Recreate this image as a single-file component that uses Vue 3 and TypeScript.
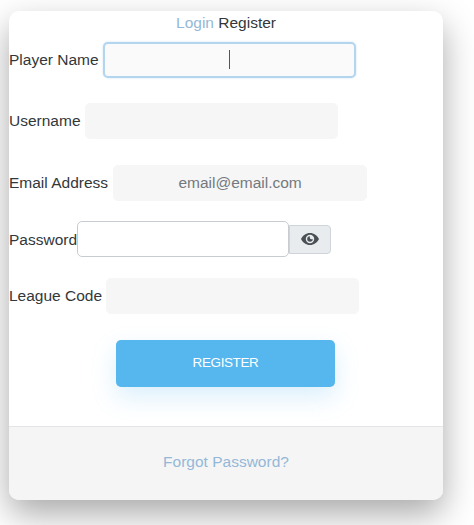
<script setup lang="ts">
interface Field {
  label: string
  placeholder?: string
  kind?: string
}

const fields: Field[] = [
  { label: 'Player Name', kind: 'focused' },
  { label: 'Username', kind: 'plain' },
  { label: 'Email Address', placeholder: 'email@email.com', kind: 'email' },
  { label: 'Password', kind: 'password' },
  { label: 'League Code', kind: 'plain' },
]
</script>

<template>
  <div class="page">
    <div class="card">
      <div class="tabs"><a class="link">Login</a> <span>Register</span></div>
      <form class="form" @submit.prevent>
        <div v-for="f in fields" :key="f.label" class="row" :class="f.kind">
          <label class="label">{{ f.label }}</label>
          <div v-if="f.kind === 'focused'" class="input-wrap">
            <input class="input" type="text" />
            <span class="caret"></span>
          </div>
          <template v-else-if="f.kind === 'password'">
            <input class="input" type="password" />
            <button class="eye" type="button" aria-label="Show password">
              <svg width="18" height="12" viewBox="0 0 18 12">
                <path
                  fill="#4a5056"
                  fill-rule="evenodd"
                  d="M9 0C5 0 1.8 2.4 0 6c1.8 3.6 5 6 9 6s7.200-2.400 9-6c-1.800-3.600-5-6-9-6zm0 10.200A4.200 4.200 0 1 1 9 1.800a4.200 4.200 0 0 1 0 8.400z"
                />
                <path fill="#4a5056" d="M9 3.200a2.800 2.800 0 1 0 2.800 2.800c-.9.500-2.400.1-2.800-.6-.4-.7-.4-1.500 0-2.200z" />
              </svg>
            </button>
          </template>
          <input v-else class="input" type="text" :placeholder="f.placeholder" />
        </div>
        <div class="actions">
          <button class="submit" type="submit">REGISTER</button>
        </div>
      </form>
      <div class="footer"><a class="link">Forgot Password?</a></div>
    </div>
  </div>
</template>

<style>
html,
body {
  margin: 0;
  background: #fff;
}
</style>

<style scoped>
.page {
  width: 474px;
  height: 525px;
  overflow: hidden;
  padding: 11px 31px 0 9px;
  box-sizing: border-box;
  font-family: "Liberation Sans", Arial, sans-serif;
  font-size: 15.5px;
  color: #33373a;
}
.card {
  width: 434px;
  height: 489px;
  background: #fff;
  border-radius: 10px;
  box-shadow: 0 14px 34px rgba(0, 0, 0, 0.34);
  display: flex;
  flex-direction: column;
}
.tabs {
  height: 24px;
  line-height: 23px;
  text-align: center;
}
.link {
  color: #94b8d6;
}
.form {
  flex: 1;
  display: flex;
  flex-direction: column;
  padding-top: 7px;
}
.row {
  display: flex;
  align-items: center;
  height: 36px;
  margin-bottom: 26px;
}
.row.focused {
  margin-bottom: 25px;
}
.row.email {
  margin-bottom: 20px;
}
.row.password {
  margin-bottom: 21px;
}
.label {
  white-space: nowrap;
  margin-right: 4px;
}
.row.email .label {
  margin-right: 5px;
}
.row.password .label {
  margin-right: 0;
  padding-top: 2px;
}
.input-wrap {
  position: relative;
  display: flex;
}
.input {
  width: 253px;
  height: 36px;
  box-sizing: border-box;
  border: 1px solid #f6f6f6;
  border-radius: 5px;
  background: #f6f6f6;
  text-align: center;
  font: inherit;
  color: inherit;
  outline: none;
  padding: 0 8px;
}
.email .input {
  width: 254px;
}
.input::placeholder {
  color: #74797e;
  opacity: 1;
}
.focused .input {
  background: #fafafa;
  border: 2px solid #b3d5ee;
  box-shadow: 0 0 2px rgba(120, 180, 230, 0.4);
}
.caret {
  position: absolute;
  left: 126px;
  top: 8px;
  width: 1px;
  height: 19px;
  background: #555;
}
.password .input {
  width: 212px;
  background: #fff;
  border: 1.5px solid #c8ccd0;
}
.eye {
  width: 42px;
  height: 29px;
  margin-left: 0;
  padding: 0;
  display: flex;
  align-items: center;
  justify-content: center;
  background: #e9ecef;
  border: 1px solid #ced4da;
  border-radius: 0 4px 4px 0;
}
.actions {
  display: flex;
  justify-content: center;
  margin-left: -1px;
}
.submit {
  width: 219px;
  height: 47px;
  border: none;
  border-radius: 5px;
  background: #56b6ee;
  color: #fff;
  font: inherit;
  font-size: 13.5px;
  letter-spacing: -0.4px;
  padding: 0 0 2px;
  box-shadow: 0 10px 24px rgba(86, 182, 238, 0.22);
}
.footer {
  height: 74px;
  padding-bottom: 3px;
  box-sizing: border-box;
  border-top: 1px solid #e3e5e8;
  background: #f5f5f6;
  border-radius: 0 0 10px 10px;
  display: flex;
  align-items: center;
  justify-content: center;
}
</style>
